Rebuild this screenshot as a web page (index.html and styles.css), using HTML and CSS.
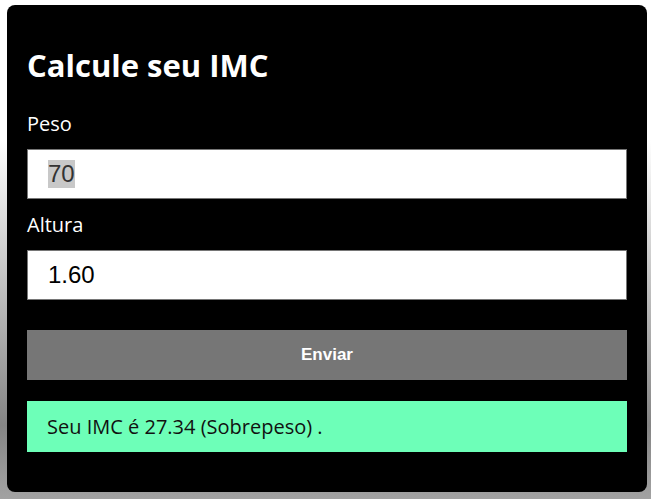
FILE: index.html
```html
<!DOCTYPE html>
<html lang="pt-BR">

<head>
  <meta charset="UTF-8">
  <meta name="viewport" content="width=device-width, initial-scale=1.0">
  <title>Calculadora IMC</title>
  <link rel="stylesheet" href="styles.css">
</head>

<body>
  <div class="imc-container">
    <form class="imc-form" id="form_imc" onsubmit="return calcImc(event)">
      <h1 class="title">Calcule seu IMC</h1>

      <label class="label" for="peso">Peso</label>
      <input class="field" type="text" id="peso" name="peso" value="70">

      <label class="label" for="altura">Altura</label>
      <input class="field" type="text" id="altura" name="altura" value="1.60">

      <button class="btn" type="submit">Enviar</button>

      <div class="result" id="resultado">Seu IMC é 27.34 (Sobrepeso) .</div>
    </form>
  </div>

  <script>
    function calcImc(evnt) {
      evnt.preventDefault();
      const peso = Number(document.querySelector("#peso").value);
      const altura = Number(document.querySelector("#altura").value);
      const imc = peso / (altura * altura);
      let nivel = "";

      if (imc < 18.5) {
        nivel = "Abaixo do peso";
      } else if (imc < 25) {
        nivel = "Peso normal";
      } else if (imc < 30) {
        nivel = "Sobrepeso";
      } else {
        nivel = "Obesidade";
      }

      document.querySelector("#resultado").innerText = "Seu IMC é " + imc.toFixed(2) + " (" + nivel + ") .";
      return false;
    }

    // deixa o peso selecionado
    const pesoEl = document.querySelector("#peso");
    pesoEl.focus();
    pesoEl.select();
  </script>
</body>

</html>
```

FILE: styles.css
```css
* {
  box-sizing: border-box;
}

html,
body {
  margin: 0;
  min-height: 100%;
}

body {
  padding: 5px 4px 0 7px;
  font-family: "Open Sans", "Noto Sans", sans-serif;
  background: linear-gradient(to bottom, #ffffff 0px, #ffffff 140px, #858585 425px, #a2a2a2 499px);
  background-repeat: no-repeat;
  background-color: #a2a2a2;
  min-height: 499px;
}

.imc-container {
  width: 640px;
  padding: 20px 20px 40px;
  border-radius: 8px;
  background-color: #000000;
}

.imc-form {
  display: flex;
  flex-direction: column;
}

.imc-form .title {
  margin: 20px 0 0;
  font-size: 31px;
  font-weight: bold;
  line-height: 41px;
  color: #ffffff;
}

.imc-form .label {
  display: block;
  margin-top: 24px;
  font-size: 20px;
  line-height: 27px;
  color: #ffffff;
}

.imc-form .field + .label {
  margin-top: 12px;
}

.imc-form .field {
  width: 100%;
  height: 50px;
  margin-top: 12px;
  padding: 0 20px;
  border: 1px solid #767676;
  font-family: "Liberation Sans", Arial, sans-serif;
  font-size: 24px;
  color: #000000;
  background-color: #ffffff;
  outline: none;
}

.imc-form .field::selection {
  background-color: #c8c8c8;
  color: #333333;
}

.imc-form .btn {
  width: 100%;
  height: 50px;
  margin-top: 30px;
  border: none;
  font-family: "Liberation Sans", Arial, sans-serif;
  font-size: 17px;
  font-weight: bold;
  color: #ffffff;
  background-color: #767676;
  cursor: pointer;
}

.imc-form .result {
  margin-top: 21px;
  padding: 12px 20px;
  font-size: 20px;
  line-height: 27px;
  color: #111111;
  background-color: #6dffb8;
}
```
